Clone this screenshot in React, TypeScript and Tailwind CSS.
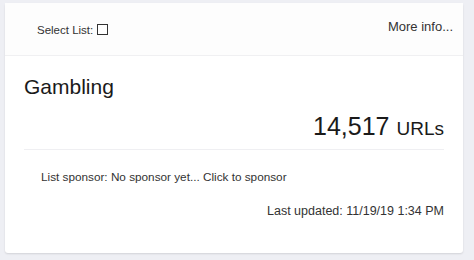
import React from 'react';

export default function App() {
  return (
    <div className="w-[474px] h-[260px] bg-[#eeeff4] pt-[3px] pl-[5px] font-['Liberation_Sans',Arial,sans-serif] text-[#222]">
      <div className="w-[458px] h-[250px] bg-white rounded-[3px] shadow-[0_1px_2px_rgba(0,0,0,0.12)] flex flex-col">
        {/* header */}
        <div className="h-[53px] flex items-start justify-between bg-[#fdfdfd] border-b border-[#f0f0f2]">
          <label className="flex items-center gap-[4px] text-[11.5px] leading-[14px] text-[#333] pl-[32px] pt-[20px]">
            Select List:
            <span className="w-[11px] h-[11px] border border-[#333] bg-white inline-block mb-[2px]" />
          </label>
          <span className="text-[13px] leading-[16px] text-[#333] pr-[10px] pt-[16px]">More info...</span>
        </div>

        {/* body */}
        <div className="px-[19px] pt-[19px]">
          <h3 className="text-[21px] leading-[24px] text-[#1a1a1a]">Gambling</h3>
          <div className="flex justify-end items-baseline gap-[7px] pt-[12px] pb-[8px] border-b border-[#efeff2]">
            <span className="text-[25px] leading-[30px] text-[#1a1a1a]">14,517</span>
            <span className="text-[19px] leading-[22px] text-[#1a1a1a]">URLs</span>
          </div>
          <p className="text-[11.75px] leading-[14px] text-[#333] pl-[17px] pt-[20px]">
            List sponsor: No sponsor yet... Click to sponsor
          </p>
          <p className="text-[12.5px] leading-[15px] text-[#333] text-right pt-[20px]">
            Last updated: 11/19/19 1:34 PM
          </p>
        </div>
      </div>
    </div>
  );
}
